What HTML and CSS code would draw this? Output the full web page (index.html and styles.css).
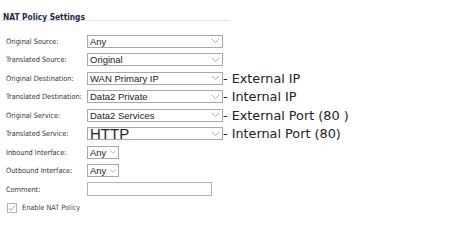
FILE: index.html
```html
<!doctype html>
<html lang="en">
<head>
  <meta charset="utf-8">
  <title>NAT Policy Settings</title>
  <link rel="stylesheet" href="styles.css">
</head>
<body>
	<div class="panel">
		<div class="head"><span class="title">NAT Policy Settings</span></div>

		<div class="form">
			<div class="row">
				<span class="lbl">Original Source:</span>
				<span class="sel"><span>Any</span><svg class="chev" viewBox="0 0 7 4"><polyline points="0,0 3.5,3.5 7,0"></polyline></svg></span>
			</div>
			<div class="row">
				<span class="lbl">Translated Source:</span>
				<span class="sel"><span>Original</span><svg class="chev" viewBox="0 0 7 4"><polyline points="0,0 3.5,3.5 7,0"></polyline></svg></span>
			</div>
			<div class="row">
				<span class="lbl">Original Destination:</span>
				<span class="sel"><span>WAN Primary IP</span><svg class="chev" viewBox="0 0 7 4"><polyline points="0,0 3.5,3.5 7,0"></polyline></svg></span>
				<span class="note">- External IP</span>
			</div>
			<div class="row">
				<span class="lbl">Translated Destination:</span>
				<span class="sel"><span>Data2 Private</span><svg class="chev" viewBox="0 0 7 4"><polyline points="0,0 3.5,3.5 7,0"></polyline></svg></span>
				<span class="note">- Internal IP</span>
			</div>
			<div class="row">
				<span class="lbl">Original Service:</span>
				<span class="sel"><span>Data2 Services</span><svg class="chev" viewBox="0 0 7 4"><polyline points="0,0 3.5,3.5 7,0"></polyline></svg></span>
				<span class="note">- External Port (80 )</span>
			</div>
			<div class="row">
				<span class="lbl">Translated Service:</span>
				<span class="sel big"><span>HTTP</span><svg class="chev" viewBox="0 0 7 4"><polyline points="0,0 3.5,3.5 7,0"></polyline></svg></span>
				<span class="note">- Internal Port (80)</span>
			</div>
			<div class="row">
				<span class="lbl">Inbound Interface:</span>
				<span class="sel sm"><span>Any</span><svg class="chev" viewBox="0 0 7 4"><polyline points="0,0 3.5,3.5 7,0"></polyline></svg></span>
			</div>
			<div class="row">
				<span class="lbl">Outbound Interface:</span>
				<span class="sel sm"><span>Any</span><svg class="chev" viewBox="0 0 7 4"><polyline points="0,0 3.5,3.5 7,0"></polyline></svg></span>
			</div>
			<div class="row">
				<span class="lbl">Comment:</span>
				<span class="txt"></span>
			</div>
			<div class="row check">
				<svg class="box" viewBox="0 0 10 10"><rect x="0.5" y="0.5" width="9" height="9"></rect><polyline points="2,5 4,7.5 8,2.5"></polyline></svg>
				<span class="lbl">Enable NAT Policy</span>
			</div>
		</div>
	</div>
</body>
</html>
```

FILE: styles.css
```css
html,body{
	margin:0; padding:0;
	background:#fff;
	font-family:"DejaVu Sans Condensed","DejaVu Sans",sans-serif;
}

.head{
	width:230px;
	height:21px;
	box-sizing:border-box;
	padding:10px 0 0 3px;
	line-height:10px;
	border-bottom:1px solid #e4e4e4;
}
.title{ font-size:8.3px; font-weight:bold; color:#1d2a48; }

.form{ margin-top:11px; }
.row{ display:flex; align-items:center; height:18.5px; }
.lbl{ width:81px; padding-left:6px; font-size:7.3px; color:#333; white-space:nowrap; }

.sel{
	width:136px; height:13px;
	box-sizing:border-box;
	border:1px solid #a8a8a8;
	background:#fff;
	display:flex; align-items:center; justify-content:space-between;
	padding:0 3px 0 2px;
	font-family:"Liberation Sans",Arial,sans-serif;
	font-size:9.5px; color:#222;
	line-height:11px;
}
.sel.big{ font-size:15px; }
.sel.sm{ width:32px; padding-right:2px; }
.chev{ width:7px; height:4px; flex:none; }
.sm .chev{ width:6px; }
.chev polyline{ fill:none; stroke:#9a9a9a; stroke-width:0.8; }

.note{
	font-family:"DejaVu Sans",sans-serif;
	font-size:12.8px; color:#222;
	white-space:pre;
}

.txt{
	width:125px; height:14px;
	box-sizing:border-box;
	border:1px solid #b4b4b4;
}

.check{ padding-left:7px; }
.check .lbl{ width:auto; padding-left:5px; color:#444; }
.box{ width:10px; height:10px; }
.box rect{ fill:#fff; stroke:#b0b0b0; stroke-width:1; }
.box polyline{ fill:none; stroke:#9aa6b4; stroke-width:1; }
```
